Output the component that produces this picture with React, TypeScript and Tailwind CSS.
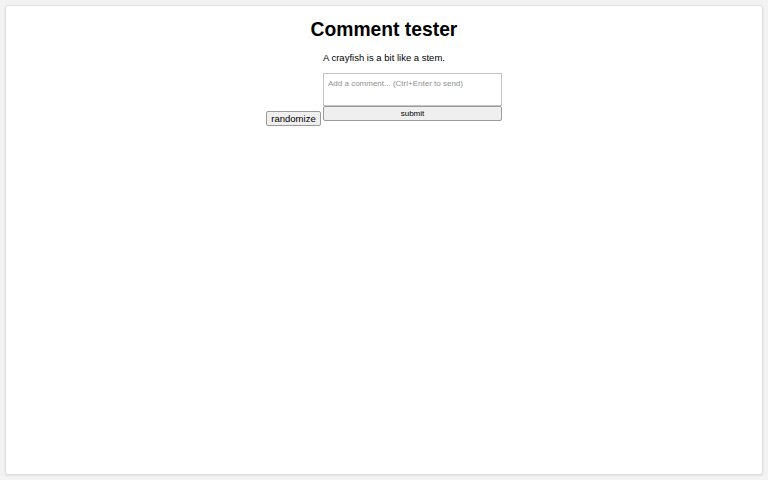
import React from "react";

export default function App() {
  return (
    <div
      className="w-[768px] h-[480px] bg-[#f3f3f3] p-[5px]"
      style={{ fontFamily: '"Liberation Sans", Arial, sans-serif' }}
    >
      <div className="h-full bg-white border border-[#dedede] rounded-[2px] shadow-[0_1px_2px_rgba(0,0,0,0.08)]">
        <h1 className="text-center text-[19.3px] font-bold text-black pt-[12px] leading-[24px]">
          Comment tester
        </h1>
        <div className="flex justify-center items-end gap-[2px] mt-[10px]">
          <button className="h-[15px] w-[55px] border border-[#9a9a9a] bg-[#efefef] rounded-[2px] text-[9.5px] leading-[12px] text-black">
            randomize
          </button>
          <div className="flex flex-col w-[179px] mb-[5px]">
            <p className="text-[9.5px] leading-[12px] text-black">A crayfish is a bit like a stem.</p>
            <textarea
              className="mt-[9px] h-[33px] w-full resize-none border border-[#c4c4c4] px-[4px] pt-[5px] pb-[3px] text-[8px] leading-[10px] outline-none placeholder:text-[#909090]"
              placeholder="Add a comment... (Ctrl+Enter to send)"
            />
            <button className="h-[15px] w-full border border-[#9a9a9a] bg-[#efefef] rounded-[2px] text-[8px] leading-[12px] text-black">
              submit
            </button>
          </div>
        </div>
      </div>
    </div>
  );
}
